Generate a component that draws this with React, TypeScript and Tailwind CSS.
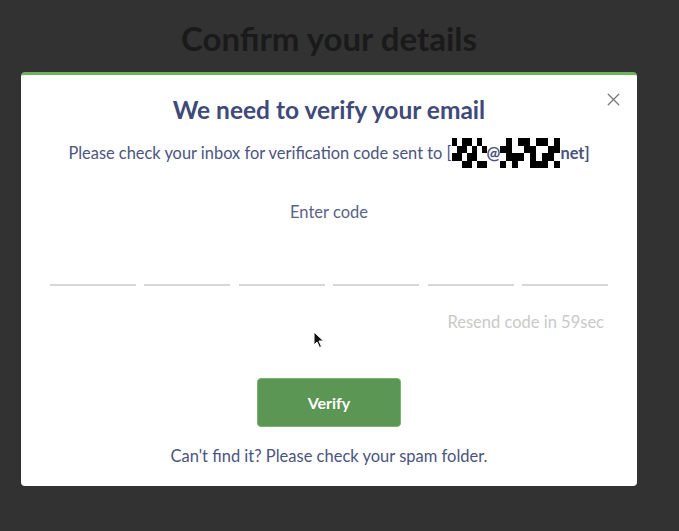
import React from 'react';
import { X } from 'lucide-react';

const mosaicA = [
  '1011010',
  '0110101',
  '1101100',
  '0011011',
];
const mosaicB = [
  '0101101101',
  '1100110011',
  '0111010110',
  '1010011101',
];

const Mosaic: React.FC<{ rows: string[]; wide?: boolean }> = ({ rows, wide }) => (
  <span className="inline-flex flex-col align-middle -mt-[3px]">
    {rows.map((row, i) => (
      <span key={i} className="flex">
        {row.split('').map((c, j) => (
          <span
            key={j}
            className={`${wide ? 'w-[6px]' : 'w-[5px]'} h-[7.5px] ${c === '1' ? 'bg-black' : 'bg-white'}`}
          />
        ))}
      </span>
    ))}
  </span>
);

export default function App() {
  const slots = [0, 1, 2, 3, 4, 5];

  return (
    <div
      className="relative w-[679px] h-[531px] bg-[#323232] overflow-hidden"
      style={{ fontFamily: 'Lato, "Open Sans", sans-serif' }}
    >
      <h1 className="pt-[18px] pr-[21px] text-center text-[33px] leading-[40px] font-bold text-[#1a1a1a]">
        Confirm your details
      </h1>

      <div className="relative mt-[14px] ml-[21px] w-[616px] h-[414px] bg-white rounded-[4px] border-t-[3px] border-[#6db35c] px-[29px]">
        <button className="absolute top-[14px] right-[13px] text-[#777]">
          <X size={21} strokeWidth={1.5} />
        </button>

        <h2 className="mt-[20px] text-center text-[24.5px] leading-[30px] font-bold text-[#3f4a7b]">
          We need to verify your email
        </h2>

        <p className="mt-[16px] text-center text-[16.4px] leading-[22px] text-[#4b5480]">
          Please check your inbox for verification code sent to [<Mosaic rows={mosaicA} />
          <span className="font-bold">@</span>
          <Mosaic rows={mosaicB} wide />
          <span className="font-bold">net]</span>
        </p>

        <p className="mt-[33px] text-center text-[16.5px] leading-[22px] text-[#5a6387]">Enter code</p>

        <div className="mt-[61px] flex gap-[8.5px]">
          {slots.map((s) => (
            <div key={s} className="flex-1 h-[2px] bg-[#d6d6d6]" />
          ))}
        </div>

        <p className="mt-[25px] pr-[4px] text-right text-[16.5px] leading-[22px] text-[#c9c9c9]">
          Resend code in 59sec
        </p>

        <div className="mt-[45px] flex justify-center">
          <button className="w-[144px] h-[49px] rounded-[4px] bg-[#5b9654] border border-[#7db075] text-white text-[16px] font-bold">
            Verify
          </button>
        </div>

        <p className="mt-[18px] text-center text-[16.5px] leading-[22px] text-[#4b5480]">
          Can't find it? Please check your spam folder.
        </p>
      </div>

      <svg className="absolute left-[313px] top-[331px]" width="12" height="18" viewBox="0 0 12 18">
        <path d="M1 1 L1 14 L4 11 L6.5 16.5 L8.5 15.5 L6 10 L10.5 10 Z" fill="#111" stroke="#fff" strokeWidth="1" />
      </svg>
    </div>
  );
}
